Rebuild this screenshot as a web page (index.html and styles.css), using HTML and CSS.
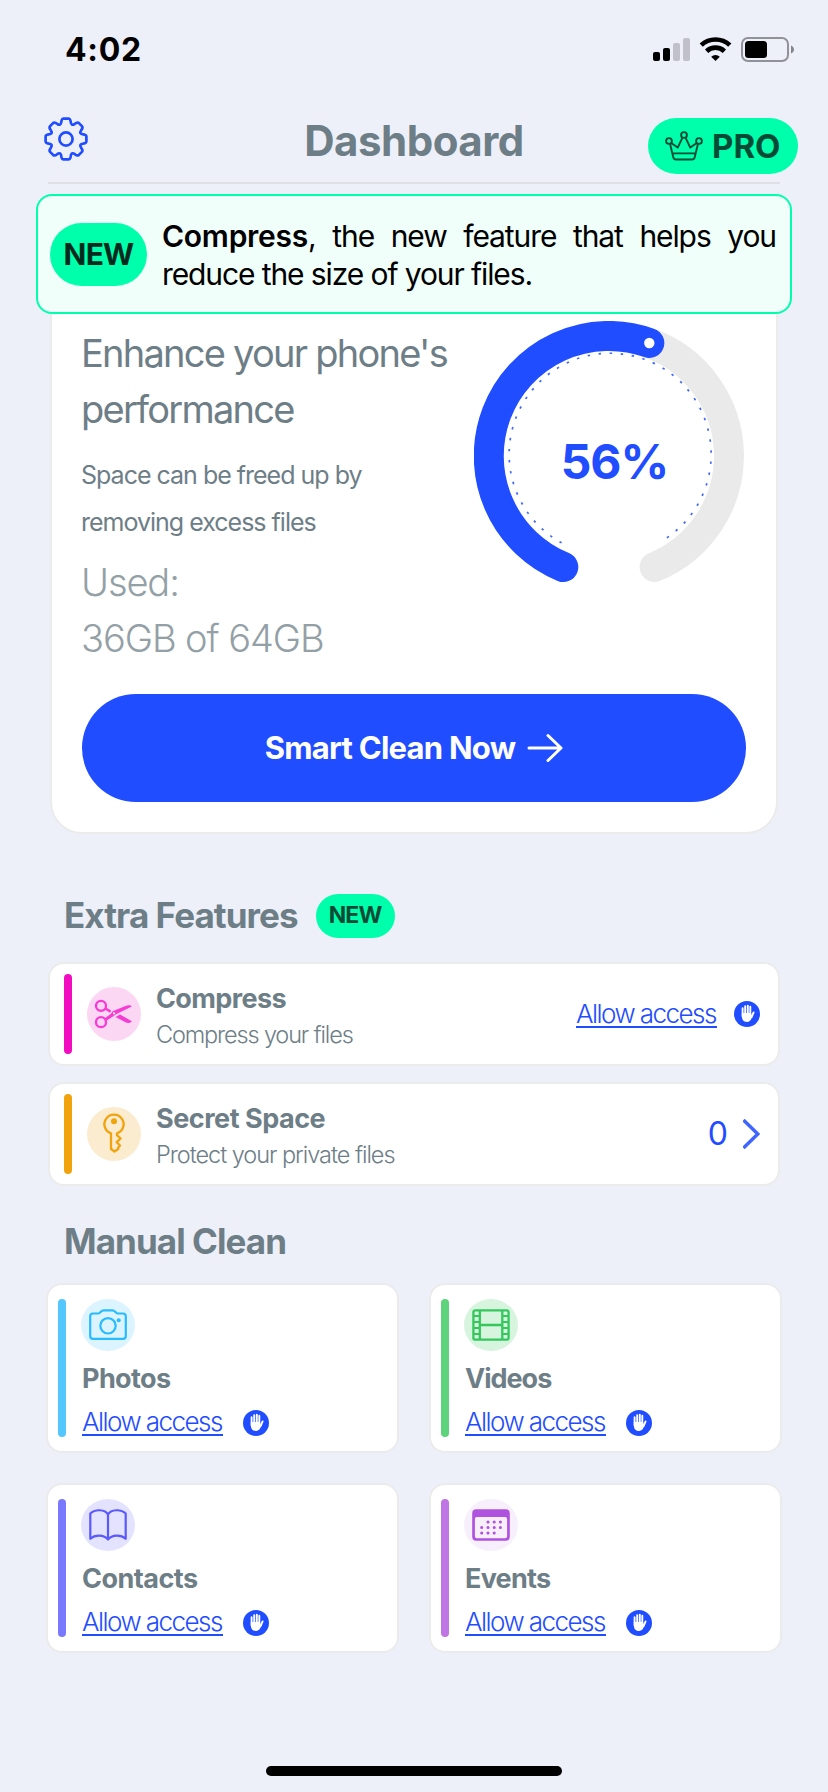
FILE: index.html
```
<!DOCTYPE html>
<html lang="en">
<head>
<meta charset="utf-8">
<title>Dashboard</title>
<link rel="stylesheet" href="styles.css">
</head>
<body>
<svg class="defs" width="0" height="0" aria-hidden="true">
  <symbol id="hand" viewBox="0 0 26 26">
    <circle cx="13" cy="13" r="13" fill="#1f4dff"/>
    <g stroke="#fff" stroke-width="1.900" stroke-linecap="round" fill="none">
      <path d="M8.600 7.300V15M11.200 5.200V14M13.800 4.600V14M16.300 5.800V14M19.600 11.400l-2 4.600"/>
    </g>
    <path d="M7.800 12h9.300v2.400l1.400-.6c-.6 4.400-2.200 7.100-5.400 7.100-3.800 0-5.300-2.600-5.300-6z" fill="#fff"/>
  </symbol>
</svg>

<div class="status">
  <span class="time">4:02</span>
  <svg class="status-icons" width="142" height="26" viewBox="0 0 142 26">
    <rect x="0" y="15" width="7" height="9" rx="2"/>
    <rect x="10" y="11" width="7" height="13" rx="2"/>
    <rect x="20" y="6" width="7" height="18" rx="2" fill="#bfc0c9"/>
    <rect x="30" y="1" width="7" height="23" rx="2" fill="#bfc0c9"/>
    <g fill="none" stroke="#000" stroke-width="4.700">
      <path d="M48.200 8.100a21 21 0 0 1 28.600 0"/>
      <path d="M53.600 14.200a13 13 0 0 1 17.800 0"/>
    </g>
    <path d="M62.500 24l-4.300-4.300a6.300 6.300 0 0 1 8.600 0z"/>
    <rect x="89" y="1" width="46" height="23" rx="6" fill="none" stroke="#919298" stroke-width="2"/>
    <rect x="92" y="4" width="22" height="17" rx="3.500"/>
    <path d="M138 8.500c4 1.500 4 6.500 0 8z" fill="#85868c"/>
  </svg>
</div>

<header class="header">
  <svg class="gear" width="44" height="44" viewBox="-22 -22 44 44" fill="none" stroke="#1f4dff" stroke-width="2.700" stroke-linejoin="round">
    <circle r="6.600"/>
    <path d="M-4.700-17.200C-4.300-19.600-4-20.400-2.300-20.400H2.300C4-20.400 4.300-19.600 4.700-17.200C5-14.300 6.400-13.400 8.800-15.200C10.700-16.700 11.900-16.800 12.900-15.900L15.900-12.900C16.800-11.900 16.700-10.700 15.200-8.800C13.400-6.400 14.300-5 17.200-4.700C19.600-4.300 20.400-4 20.400-2.300V2.300C20.400 4 19.600 4.300 17.200 4.700C14.300 5 13.400 6.400 15.200 8.800C16.700 10.700 16.800 11.900 15.900 12.900L12.900 15.900C11.900 16.800 10.700 16.700 8.800 15.200C6.400 13.400 5 14.300 4.700 17.200C4.300 19.600 4 20.400 2.300 20.400H-2.300C-4 20.400-4.300 19.600-4.700 17.200C-5 14.300-6.400 13.400-8.800 15.200C-10.700 16.700-11.900 16.800-12.900 15.900L-15.900 12.900C-16.800 11.900-16.700 10.700-15.200 8.800C-13.400 6.400-14.300 5-17.200 4.700C-19.600 4.300-20.400 4-20.400 2.300V-2.300C-20.400-4-19.600-4.300-17.200-4.700C-14.300-5-13.400-6.400-15.200-8.800C-16.700-10.700-16.800-11.900-15.900-12.900L-12.900-15.900C-11.900-16.800-10.700-16.700-8.800-15.200C-6.400-13.400-5-14.300-4.700-17.200Z"/>
  </svg>
  <h1 class="title">Dashboard</h1>
  <div class="pro">
    <svg width="38" height="30" viewBox="0 0 38 30" fill="none" stroke="#004b36" stroke-width="1.900" stroke-linejoin="round">
      <circle cx="4" cy="10" r="2.900"/><circle cx="19" cy="4" r="2.900"/><circle cx="34" cy="10" r="2.900"/>
      <path d="M5 12.800L8.300 26.200Q8.800 28.500 11 28.500H27Q29.200 28.500 29.700 26.200L33 12.800M31.400 12.200L25.300 16.600L20.500 6.700M17.500 6.700L12.700 16.600L6.600 12.200M7.600 22.400H30.400"/>
    </svg>
    <span class="pro-text">PRO</span>
  </div>
</header>
<div class="divider"></div>

<main class="content">
  <section class="banner">
    <span class="banner-badge">NEW</span>
    <p class="banner-text"><span class="spread"><b>Compress</b>, the new feature that helps you</span> <span class="line">reduce the size of your files.</span></p>
  </section>

  <section class="summary">
    <div class="summary-top">
      <div class="summary-text">
        <h2 class="lead">Enhance your phone's<br>performance</h2>
        <p class="hint">Space can be freed up by<br>removing excess files</p>
        <p class="used">Used:<br>36GB of 64GB</p>
      </div>
      <svg class="gauge" width="270" height="270" viewBox="474 321 270 270" fill="none">
        <path d="M654.600 567A120 120 0 0 0 649.300 343" stroke="#eaeaea" stroke-width="30" stroke-linecap="round"/>
        <path d="M563.300 567A120 120 0 0 1 649.300 343" stroke="#1f4dff" stroke-width="30" stroke-linecap="round"/>
        <circle cx="649.300" cy="343" r="5.200" fill="#fff"/>
        <path d="M561.600 542.800A101 101 0 1 1 661.500 541.200" stroke="#3f66ff" stroke-width="1.700" stroke-dasharray="2.400 8.680"/>
        <text class="percent" x="614.500" y="478.500" text-anchor="middle">56%</text>
      </svg>
    </div>
    <button class="cta"><span>Smart Clean Now</span>
      <svg width="36" height="30" viewBox="0 0 36 30" fill="none" stroke="#fff" stroke-width="3" stroke-linecap="round" stroke-linejoin="round"><path d="M2 15H34M21 2.500L34 15L21 27.500"/></svg>
    </button>
  </section>

  <div class="section-head">
    <h2 class="section-title">Extra Features</h2>
    <span class="badge">NEW</span>
  </div>

  <div class="rows">
    <article class="row">
      <i class="bar pink"></i>
      <svg class="row-icon" width="54" height="54" viewBox="0 0 54 54">
        <circle cx="27" cy="27" r="27" fill="#fcd7f4"/>
        <g fill="none" stroke="#f63bd2" stroke-width="2.300"><circle cx="14" cy="18.800" r="5"/><circle cx="14" cy="35.200" r="5"/><path d="M18.300 21.500L23.600 24.600M18.200 32.500L25 28.200" stroke-width="2.600"/></g>
        <path d="M18.500 31.200L24.300 26.600C24.500 24.800 26 24 28 23.300L38.500 18.900C41 17.900 43.500 18.200 44.800 19.400L29 27.200L19.800 33.600ZM28.600 30L33 27.500L44.800 34.200C43.500 36.200 40.800 36.400 38.500 35.300Z" fill="#f63bd2"/>
        <circle cx="27" cy="26.300" r="1.100" fill="#fff"/>
      </svg>
      <div class="row-text"><h3 class="name compress">Compress</h3><p class="desc d1">Compress your files</p></div>
      <div class="row-end access"><a class="link">Allow access</a><svg width="26" height="26"><use href="#hand"/></svg></div>
    </article>
    <article class="row">
      <i class="bar orange"></i>
      <svg class="row-icon" width="54" height="54" viewBox="0 0 54 54">
        <circle cx="27" cy="27" r="27" fill="#fbebcf"/>
        <path d="M24 26.400A9.600 9.600 0 1 1 30 26.400V28.200L33.600 31.500L29.700 35.200L33 38.500L31.200 40.500V42L27.500 44.500L24 42Z" fill="none" stroke="#f1a30d" stroke-width="2.300" stroke-linejoin="round"/>
        <circle cx="27" cy="14.200" r="3" fill="#f1a30d"/>
      </svg>
      <div class="row-text"><h3 class="name secret">Secret Space</h3><p class="desc d2">Protect your private files</p></div>
      <div class="row-end count"><span>0</span><svg width="17" height="30" viewBox="0 0 17 30" fill="none" stroke="#3e66ff" stroke-width="3.400"><path d="M.5 1L14.800 15L.5 29"/></svg></div>
    </article>
  </div>

  <h2 class="section-title manual">Manual Clean</h2>

  <div class="tiles">
    <article class="tile">
      <i class="bar sky"></i>
      <div class="tile-body">
        <svg class="tile-icon" width="54" height="52" viewBox="0 0 54 52">
          <ellipse cx="27" cy="26" rx="27" ry="26" fill="#dcf4ff"/>
          <g fill="none" stroke="#27bbff" stroke-width="2.200" stroke-linejoin="round"><path d="M12 14.500H17.500C19.300 14.500 20 11.300 22.500 11.300H31.500C34 11.300 34.700 14.500 36.500 14.500H42Q44.800 14.500 44.800 17.300V37Q44.800 39.800 42 39.800H12Q9.200 39.800 9.200 37V17.300Q9.200 14.500 12 14.500Z"/><circle cx="27" cy="26.800" r="7.700"/></g>
          <circle cx="37.700" cy="21.300" r="2" fill="#27bbff"/>
        </svg>
        <h3 class="name tile-name photos">Photos</h3>
        <div class="access tile-access"><a class="link">Allow access</a><svg width="26" height="26"><use href="#hand"/></svg></div>
      </div>
    </article>
    <article class="tile">
      <i class="bar green"></i>
      <div class="tile-body">
        <svg class="tile-icon" width="54" height="52" viewBox="0 0 54 52">
          <ellipse cx="27" cy="26" rx="27" ry="26" fill="#d7f4df"/>
          <g fill="none" stroke="#34c75c" stroke-width="2.300"><rect x="9.400" y="11.400" width="35.200" height="29.300" rx="2"/><path d="M15.800 11V41M38.300 11V41M16 26H38"/><path d="M9 17.100H16M9 23H16M9 29H16M9 34.900H16M38 17.100H45M38 23H45M38 29H45M38 34.900H45" stroke-width="2"/></g>
        </svg>
        <h3 class="name tile-name videos">Videos</h3>
        <div class="access tile-access"><a class="link">Allow access</a><svg width="26" height="26"><use href="#hand"/></svg></div>
      </div>
    </article>
    <article class="tile">
      <i class="bar indigo"></i>
      <div class="tile-body">
        <svg class="tile-icon" width="54" height="52" viewBox="0 0 54 52">
          <ellipse cx="27" cy="26" rx="27" ry="26" fill="#e3e3ff"/>
          <path d="M27 15.500C24 10.200 14 9.800 9.300 14.500V39.800C14 35.500 23 35.500 27 40.500C31 35.500 40 35.500 44.700 39.800V14.500C40 9.800 30 10.200 27 15.500V40.500" fill="none" stroke="#5a58ff" stroke-width="2.200" stroke-linejoin="round"/>
        </svg>
        <h3 class="name tile-name contacts">Contacts</h3>
        <div class="access tile-access"><a class="link">Allow access</a><svg width="26" height="26"><use href="#hand"/></svg></div>
      </div>
    </article>
    <article class="tile">
      <i class="bar violet"></i>
      <div class="tile-body">
        <svg class="tile-icon" width="54" height="52" viewBox="0 0 54 52">
          <ellipse cx="27" cy="26" rx="27" ry="26" fill="#f7effc"/>
          <path fill-rule="evenodd" d="M12.500 10.300H41.500Q45.800 10.300 45.800 14.500V37.500Q45.800 41.800 41.500 41.800H12.500Q8.200 41.800 8.200 37.500V14.500Q8.200 10.300 12.500 10.300ZM12.800 18Q10.900 18 10.900 20V37Q10.900 39.200 12.800 39.200H41.200Q43.100 39.200 43.100 37V20Q43.100 18 41.200 18Z" fill="#af52de"/>
          <g stroke="#af52de" stroke-width="3.100" stroke-linecap="round"><path d="M24 23h0M30.200 23h0M36.400 23h0M17.700 28.500h0M24 28.500h0M30.200 28.500h0M36.400 28.500h0M17.700 34h0M24 34h0M30.200 34h0"/></g>
        </svg>
        <h3 class="name tile-name events">Events</h3>
        <div class="access tile-access"><a class="link">Allow access</a><svg width="26" height="26"><use href="#hand"/></svg></div>
      </div>
    </article>
  </div>
</main>
<div class="home"></div>
</body>
</html>
```
FILE: styles.css
```
* { box-sizing: border-box; margin: 0; padding: 0; }
body { width: 828px; height: 1792px; overflow: hidden; display: flex; flex-direction: column; background: #eef0f9; color: #6d7e87; font-family: Inter, "Liberation Sans", sans-serif; font-weight: 400; white-space: nowrap; }
svg { display: block; flex: none; }
.defs { position: absolute; }

.status { height: 98px; display: flex; justify-content: space-between; align-items: flex-start; padding: 30px 33px 0 65px; color: #000; }
.time { font-size: 32px; line-height: 40px; font-weight: 700; letter-spacing: 0.7px; }
.status-icons { margin-top: 7px; }

.header { height: 84px; display: grid; grid-template-columns: 256px 1fr 270px; align-items: center; padding: 0 30px 0 44px; }
.gear { margin-top: -3px; }
.title { padding-top: 2px; font-size: 42px; font-weight: 700; line-height: 50px; letter-spacing: -0.5px; text-align: center; }
.pro { justify-self: end; width: 150px; height: 56px; margin-top: 12px; border-radius: 28px; background: #00ffab; color: #004b36; display: flex; align-items: center; padding-left: 17px; gap: 9px; }
.pro-text { font-size: 33px; font-weight: 700; line-height: 40px; }
.divider { height: 2px; margin: 0 48px; background: #dfe0e4; }

.content { flex: 1; display: flex; flex-direction: column; }
.banner { position: relative; z-index: 1; height: 120px; margin: 10px 36px 0; border: 2px solid #00ffab; border-radius: 16px; background: #f0fffa; display: flex; align-items: center; gap: 15px; padding: 0 14px 0 12px; color: #000; }
.banner-badge { width: 97px; height: 63px; border-radius: 32px; background: #00ffab; color: #002a1e; font-size: 30px; font-weight: 700; line-height: 62px; letter-spacing: -0.8px; text-align: center; }
.banner-text { flex: 1; padding-top: 2px; font-size: 30px; line-height: 38px; letter-spacing: -1.1px; }
.banner-text b { font-weight: 600; letter-spacing: -0.25px; }
.spread { display: block; text-align: justify; text-align-last: justify; }
.line { display: block; }

.summary { height: 554px; margin: -34px 50px 0; border: 2px solid #ebebeb; border-radius: 32px; background: #fff; padding: 43px 30px 0; }
.summary-top { display: flex; height: 369px; }
.summary-text { width: 392px; margin-left: -1px; }
.gauge { margin: -4px 0 0 1px; }
.lead { font-size: 38px; font-weight: 400; line-height: 56px; letter-spacing: -1.75px; }
.hint { margin-top: 15px; font-size: 25px; line-height: 47px; letter-spacing: -1px; }
.used { margin-top: 8px; font-size: 38px; font-weight: 300; line-height: 56px; letter-spacing: -1.08px; color: #93a0a6; }
.percent { font-size: 48px; font-weight: 700; letter-spacing: -1px; fill: #1f4dff; }
.cta { width: 664px; height: 108px; border: 0; border-radius: 54px; background: #1f4dff; color: #fff; display: flex; align-items: center; justify-content: center; gap: 12px; font: 700 31px/40px Inter, sans-serif; letter-spacing: -0.75px; }

.section-head { display: flex; align-items: center; gap: 18px; margin: 60px 0 0 64px; }
.section-title { font-size: 35px; font-weight: 700; line-height: 44px; letter-spacing: -0.94px; }
.section-head .section-title { line-height: 42px; padding-bottom: 2px; }
.badge { width: 79px; height: 44px; border-radius: 22px; background: #00ffab; color: #004b36; font-size: 23px; font-weight: 700; line-height: 43px; letter-spacing: -0.8px; text-align: center; }
.manual { margin: 33px 0 0 64px; }

.rows { display: flex; flex-direction: column; gap: 16px; margin: 24px 48px 0; }
.row { height: 104px; border: 2px solid #ebebeb; border-radius: 16px; background: #fff; display: flex; align-items: center; padding: 0 18px 0 14px; }
.bar { display: block; width: 8px; border-radius: 4px; flex: none; }
.row .bar { height: 80px; }
.row-icon { margin: 0 15px; }
.row-text { padding-top: 6px; }
.pink { background: #f20cbf; }
.orange { background: #f1a30d; }
.sky { background: #54c7ff; }
.green { background: #5dd37b; }
.indigo { background: #7a78ff; }
.violet { background: #bf75e4; }
.name { font-size: 27px; font-weight: 700; line-height: 36px; }
.desc { font-size: 23.5px; font-weight: 300; line-height: 36px; }
.compress { letter-spacing: -0.6px; }
.secret { letter-spacing: -0.48px; }
.d1 { letter-spacing: -1.15px; }
.d2 { letter-spacing: -1.03px; }
.row-end { margin-left: auto; display: flex; align-items: center; color: #1f4dff; }
.access { display: flex; align-items: center; gap: 17px; }
.link { width: 141px; border-bottom: 2px solid #1f4dff; color: #1f4dff; font-size: 26px; font-weight: 300; line-height: 24px; letter-spacing: -1.54px; }
.row .link { margin-top: 2px; }
.count { gap: 15px; font-size: 32px; line-height: 40px; }

.tiles { display: grid; grid-template-columns: 353px 353px; gap: 30px; margin: 20px 46px 0; }
.tile { height: 170px; border: 2px solid #ebebeb; border-radius: 16px; background: #fff; display: flex; padding: 14px 0 0 10px; }
.tile .bar { height: 138px; }
.tile-body { padding-left: 16px; }
.tile-icon { margin-left: -1px; }
.tile-name { margin-top: 10px; }
.tile-access { gap: 20px; margin-top: 13px; }
.photos { letter-spacing: -0.61px; }
.videos { letter-spacing: -1px; }
.contacts { letter-spacing: -0.52px; }
.events { letter-spacing: -0.74px; }
.home { width: 296px; height: 10px; margin: 0 auto 16px; border-radius: 5px; background: #000; }
```
